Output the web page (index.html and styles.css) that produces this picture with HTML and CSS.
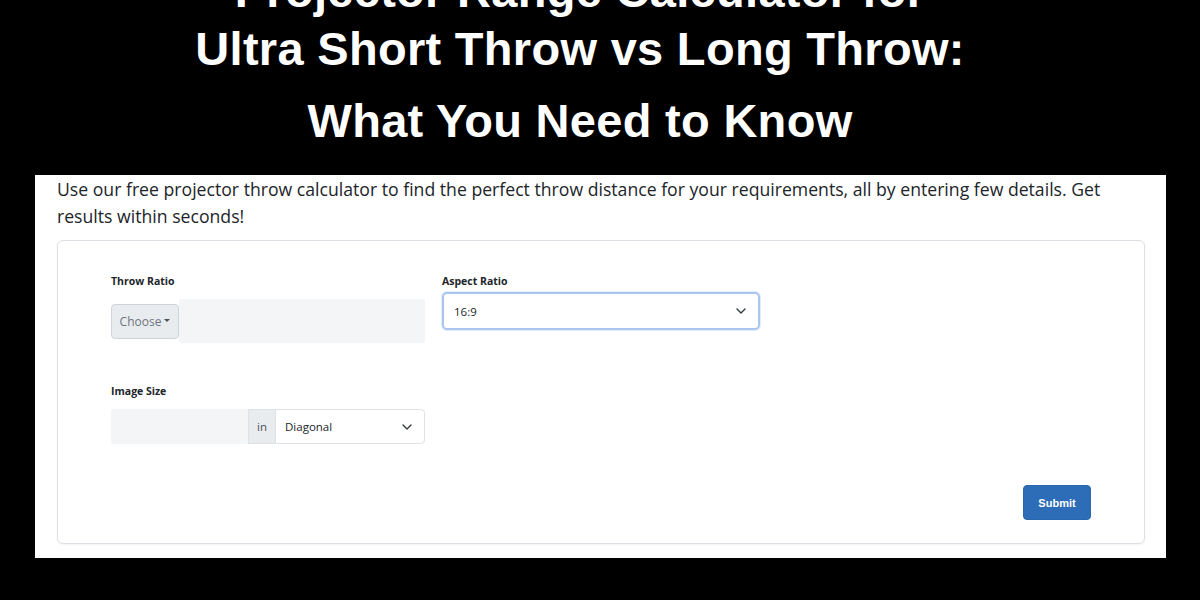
FILE: index.html
```html
<!DOCTYPE html>
<html lang="en">
<head>
<meta charset="utf-8">
<title>Projector Range Calculator</title>
<link rel="stylesheet" href="styles.css">
</head>
<body>
<header class="hero">
  <h1 class="hero-title">
    <span class="hero-line hero-line-first">Projector Range Calculator for</span>
    <span class="hero-line">Ultra Short Throw vs Long Throw:</span>
    <span class="hero-line hero-line-last">What You Need to Know</span>
  </h1>
</header>
<main class="panel">
  <p class="intro">Use our free projector throw calculator to find the perfect throw distance for your requirements, all by entering few details. Get results within seconds!</p>
  <form class="card">
    <div class="grid">
      <div class="field">
        <label class="label">Throw Ratio</label>
        <div class="group group-throw">
          <button type="button" class="choose">Choose <span class="caret"></span></button>
          <div class="input input-tall"></div>
        </div>
      </div>
      <div class="field">
        <label class="label">Aspect Ratio</label>
        <div class="select select-focus">
          <span>16:9</span>
          <svg class="chev" width="10" height="6" viewBox="0 0 10 6"><path d="M1 1l4 4 4-4" fill="none" stroke="#343a40" stroke-width="1.4" stroke-linecap="round" stroke-linejoin="round"/></svg>
        </div>
      </div>
      <div class="field field-row2">
        <label class="label">Image Size</label>
        <div class="group group-size">
          <div class="input input-size"></div>
          <span class="addon">in</span>
          <div class="select select-diag">
            <span>Diagonal</span>
            <svg class="chev" width="10" height="6" viewBox="0 0 10 6"><path d="M1 1l4 4 4-4" fill="none" stroke="#343a40" stroke-width="1.4" stroke-linecap="round" stroke-linejoin="round"/></svg>
          </div>
        </div>
      </div>
    </div>
    <div class="actions">
      <button type="button" class="submit">Submit</button>
    </div>
  </form>
</main>
</body>
</html>
```

FILE: styles.css
```css
* { box-sizing: border-box; }
html, body { margin: 0; padding: 0; }
body {
  background: #000;
  width: 1200px;
  height: 600px;
  overflow: hidden;
  font-family: "Open Sans", "Noto Sans", sans-serif;
}
.hero {
  height: 175px;
  overflow: hidden;
}
.hero-title {
  margin: -35px 0 0 0;
  padding-right: 40px;
  text-align: center;
  color: #fff;
  font-family: "Liberation Sans", Arial, sans-serif;
  font-weight: 700;
  font-size: 47px;
  line-height: 64px;
  letter-spacing: 0.3px;
}
.hero-line { display: block; }
.hero-line-first { line-height: 52px; }
.hero-line-last { margin-top: 8px; }

.panel {
  margin-left: 35px;
  width: 1131px;
  height: 383px;
  background: #fff;
  padding: 0 21px 15px 22px;
}
.intro {
  margin: 0;
  padding-top: 1px;
  width: 1075px;
  font-size: 17.65px;
  line-height: 27px;
  color: #212529;
}
.card {
  margin-top: 10px;
  border: 1px solid #dcdfe3;
  border-radius: 6px;
  height: 304px;
  padding: 33px 53px 0 53px;
  box-shadow: 0 1px 2px rgba(0,0,0,0.05);
}
.grid {
  display: grid;
  grid-template-columns: 314px 318px;
  column-gap: 17px;
  row-gap: 41px;
  align-items: start;
}
.label {
  display: block;
  font-size: 10.5px;
  font-weight: 700;
  color: #212529;
  line-height: 14px;
}
.group {
  display: flex;
  align-items: center;
}
.group-throw { margin-top: 11px; height: 44px; }
.choose {
  width: 68px;
  height: 35px;
  border: 1px solid #ced4da;
  border-radius: 4px;
  background: #e9ecef;
  color: #6c757d;
  font-family: "Open Sans", "Noto Sans", sans-serif;
  font-size: 12px;
  padding: 0;
  display: flex;
  align-items: center;
  justify-content: center;
  gap: 3px;
}
.caret {
  width: 0;
  height: 0;
  border-left: 3px solid transparent;
  border-right: 3px solid transparent;
  border-top: 3.5px solid #495057;
  margin-top: -2px;
}
.input {
  background: #f4f5f7;
  border-radius: 2px;
}
.input-tall { flex: 1; height: 44px; }
.select {
  display: flex;
  align-items: center;
  justify-content: space-between;
  background: #fff;
  font-size: 11.5px;
  color: #212529;
}
.select-focus {
  margin-top: 4px;
  height: 38px;
  border: 2px solid #aac6ee;
  border-radius: 5px;
  padding: 0 12px 0 10px;
  box-shadow: 0 0 0 1px #e3ecfa;
}
.group-size { margin-top: 11px; height: 35px; }
.input-size { width: 137px; height: 35px; }
.addon {
  width: 27px;
  height: 35px;
  background: #e9ecef;
  border: 1px solid #dee2e6;
  border-right: none;
  font-size: 11.5px;
  color: #495057;
  display: flex;
  align-items: center;
  justify-content: center;
}
.select-diag {
  flex: 1;
  height: 35px;
  border: 1px solid #dee2e6;
  border-radius: 0 4px 4px 0;
  padding: 0 12px 0 9px;
}
.actions {
  display: flex;
  justify-content: flex-end;
  margin-top: 41px;
}
.submit {
  width: 68px;
  height: 35px;
  background: #2d6db8;
  border: 1px solid #2a66ad;
  border-radius: 4px;
  color: #fff;
  font-family: "Liberation Sans", Arial, sans-serif;
  font-weight: 700;
  font-size: 11px;
  padding: 0;
}
```
